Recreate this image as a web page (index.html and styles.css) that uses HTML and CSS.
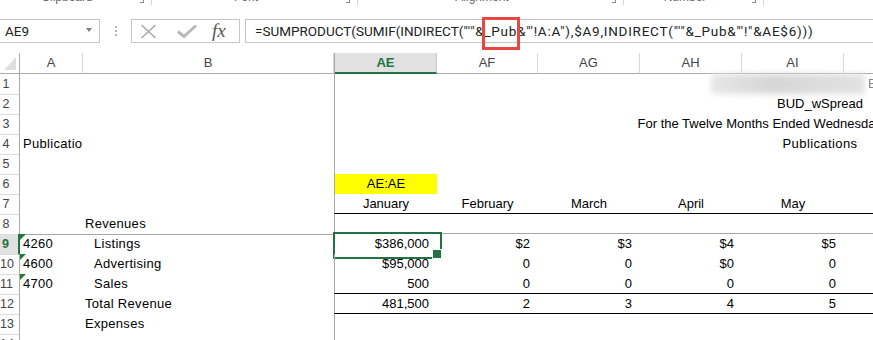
FILE: index.html
```html
<!DOCTYPE html>
<html>
<head>
<meta charset="utf-8">
<title>Excel</title>
<link rel="stylesheet" href="styles.css">
</head>
<body>
<div class="ribbon">
  <div class="grp g1"><span class="glabel">Clipboard</span><span class="launch"><i></i></span></div>
  <div class="grp g2"><span class="glabel">Font</span><span class="launch"><i></i></span></div>
  <div class="grp g3"><span class="glabel">Alignment</span><span class="launch"><i></i></span></div>
  <div class="grp g4"><span class="glabel">Number</span><span class="launch"><i></i></span></div>
</div>

<div class="fbar">
  <div class="namebox"><span>AE9</span><span class="arrow"></span></div>
  <div class="grip"><i></i><i></i><i></i></div>
  <div class="fxbox">
    <svg class="ico-x" width="17" height="15" viewBox="0 0 17 15"><path d="M1.5 1L15.5 14M15.5 1L1.5 14" stroke="#ababab" stroke-width="1.6" fill="none"/></svg>
    <svg class="ico-ok" width="20" height="14" viewBox="0 0 20 14"><path d="M1 7.5L7 12.5L19 1.5" stroke="#b9b9b9" stroke-width="3" fill="none" stroke-linejoin="miter"/></svg>
    <span class="fx">fx</span>
  </div>
  <div class="formula">=SUMPRODUCT(SUMIF(INDIRECT(<span class="fs">"'"&amp;_Pub&amp;"'!A:A"),$A9,INDIRECT("'"&amp;_Pub&amp;"'!"&amp;AE$6)))</span></div>
</div>

<div class="sheet">
  <div class="row hdr">
    <div class="corner"><svg width="12" height="13" viewBox="0 0 12 13"><path d="M12 0V13H0Z" fill="#dedede"/></svg></div>
    <div class="ch">A</div>
    <div class="ch">B</div>
    <div class="right">
      <div class="ch csel">AE</div><div class="ch">AF</div><div class="ch">AG</div><div class="ch">AH</div><div class="ch">AI</div><div class="ch"></div><div class="ch"></div>
    </div>
  </div>

  <div class="row">
    <div class="rh">1</div><div class="c"></div><div class="c"></div>
    <div class="right"><div class="redact"></div><span class="tail">E</span></div>
  </div>
  <div class="row">
    <div class="rh">2</div><div class="c"></div><div class="c"></div>
    <div class="right"><div class="title">BUD_wSpread</div></div>
  </div>
  <div class="row">
    <div class="rh">3</div><div class="c"></div><div class="c"></div>
    <div class="right"><div class="title">For the Twelve Months Ended Wednesday, December 31, 2014</div></div>
  </div>
  <div class="row">
    <div class="rh">4</div><div class="c a">Publications</div><div class="c"></div>
    <div class="right"><div class="title wide">Publications</div></div>
  </div>
  <div class="row">
    <div class="rh">5</div><div class="c"></div><div class="c"></div>
    <div class="right"></div>
  </div>
  <div class="row">
    <div class="rh">6</div><div class="c"></div><div class="c"></div>
    <div class="right"><div class="c ctr yel">AE:AE</div></div>
  </div>
  <div class="row">
    <div class="rh">7</div><div class="c"></div><div class="c"></div>
    <div class="right rule">
      <div class="c ctr">January</div><div class="c ctr">February</div><div class="c ctr">March</div><div class="c ctr">April</div><div class="c ctr">May</div>
    </div>
  </div>
  <div class="row frz">
    <div class="rh">8</div><div class="c"></div><div class="c b">Revenues</div>
    <div class="right"></div>
  </div>
  <div class="row">
    <div class="rh rsel">9</div><div class="c a err">4260</div><div class="c b ind">Listings</div>
    <div class="right">
      <div class="c num sel">$386,000</div><div class="c num">$2</div><div class="c num">$3</div><div class="c num">$4</div><div class="c num">$5</div>
    </div>
  </div>
  <div class="row">
    <div class="rh">10</div><div class="c a err">4600</div><div class="c b ind">Advertising</div>
    <div class="right">
      <div class="c num">$95,000</div><div class="c num">0</div><div class="c num">0</div><div class="c num">$0</div><div class="c num">0</div>
    </div>
  </div>
  <div class="row">
    <div class="rh">11</div><div class="c a err">4700</div><div class="c b ind">Sales</div>
    <div class="right rule">
      <div class="c num">500</div><div class="c num">0</div><div class="c num">0</div><div class="c num">0</div><div class="c num">0</div>
    </div>
  </div>
  <div class="row">
    <div class="rh">12</div><div class="c"></div><div class="c b">Total Revenue</div>
    <div class="right rule">
      <div class="c num">481,500</div><div class="c num">2</div><div class="c num">3</div><div class="c num">4</div><div class="c num">5</div>
    </div>
  </div>
  <div class="row">
    <div class="rh">13</div><div class="c"></div><div class="c b">Expenses</div>
    <div class="right"></div>
  </div>
  <div class="row">
    <div class="rh">14</div><div class="c"></div><div class="c"></div>
    <div class="right"></div>
  </div>
</div>

<div class="callout"></div>
</body>
</html>
```

FILE: styles.css
```css
* { box-sizing: border-box; }
html, body { margin: 0; padding: 0; background: #fff; }
body {
  width: 873px;
  height: 340px;
  overflow: hidden;
  position: relative;
  font-family: "Liberation Sans", Arial, sans-serif;
  color: #000;
}

/* ribbon group labels (cut off at top) */
.ribbon { display: flex; height: 6px; overflow: hidden; }
.grp { flex: none; display: flex; align-items: flex-start; border-right: 1px solid #d6d6d6; height: 5px; }
.g1 { width: 152px; }
.g2 { width: 206px; }
.g3 { width: 266px; }
.g4 { width: 140px; }
.glabel {
  flex: 1;
  text-align: center;
  font-size: 12px;
  line-height: 12px;
  margin-top: -9px;
  color: #6a6a6a;
  white-space: nowrap;
}
.launch { width: 17px; padding-left: 6px; }
.launch i { display: block; width: 4px; height: 3px; border-right: 1px solid #8a8a8a; border-bottom: 1px solid #8a8a8a; }

/* formula bar */
.fbar {
  display: flex;
  align-items: center;
  height: 24px;
  margin-top: 13px;
  margin-bottom: 10px;
  font-family: Roboto, "Liberation Sans", sans-serif;
  font-size: 13.5px;
  color: #222;
}
.fbar > * { flex: none; }
.namebox {
  width: 101px;
  margin-left: -1px;
  height: 24px;
  border: 1px solid #c6c6c6;
  display: flex;
  align-items: center;
  padding-left: 5px;
}
.arrow {
  margin-left: auto;
  margin-right: 7px;
  width: 0; height: 0;
  border-left: 3.5px solid transparent;
  border-right: 3.5px solid transparent;
  border-top: 4px solid #7d7d7d;
  margin-top: -2px;
}
.grip { margin-left: 15px; width: 2px; display: flex; flex-direction: column; gap: 2px; }
.grip i { display: block; width: 2px; height: 2px; background: #b4b4b4; }
.fxbox {
  margin-left: 14px;
  width: 109px;
  height: 24px;
  border: 1px solid #c6c6c6;
  display: flex;
  align-items: center;
  padding-left: 8px;
}
.ico-x { flex: none; }
.ico-ok { flex: none; margin-left: 20px; }
.fx {
  margin-left: 15px;
  font-family: "Liberation Serif", "Times New Roman", serif;
  font-style: italic;
  font-size: 19px;
  color: #555;
  line-height: 20px;
}
.formula {
  margin-left: 5px;
  width: 640px;
  height: 24px;
  border: 1px solid #c6c6c6;
  padding-left: 9px;
  line-height: 22px;
  white-space: nowrap;
  overflow: hidden;
}
.fs { letter-spacing: 0.75px; }

/* sheet */
.sheet { font-size: 13px; line-height: 20px; }
.row {
  display: grid;
  grid-template-columns: 20px 63px 251px 1fr;
  height: 20px;
}
.right {
  display: grid;
  grid-template-columns: 102px 101px 102px 102px 102px 102px 102px;
  border-left: 1px solid #a8a8a8;
  position: relative;
  height: 20px;
}
.hdr { height: 21px; }
.hdr .right { height: 21px; }
.corner {
  border-right: 1px solid #ababab;
  border-bottom: 1px solid #ababab;
  display: flex;
  align-items: flex-end;
  justify-content: flex-end;
  padding: 0 3px 3px 0;
}
.ch {
  height: 21px;
  border-right: 1px solid #d8d8d8;
  border-bottom: 1px solid #ababab;
  text-align: center;
  color: #444;
  line-height: 20px;
}
.csel {
  background: #e1e1e1;
  color: #217346;
  font-weight: bold;
  border-bottom: 2px solid #217346;
  border-right-color: #c8c8c8;
}
.rh {
  border-right: 1px solid #ababab;
  border-bottom: 1px solid #dcdcdc;
  text-align: center;
  padding-right: 7px;
  color: #444;
  font-size: 12.5px;
  white-space: nowrap;
}
.rsel {
  background: #e1e1e1;
  color: #217346;
  font-weight: bold;
  border-right: 2px solid #217346;
}
.c { padding: 0 2px; white-space: nowrap; overflow: hidden; }
.a { padding-left: 3px; letter-spacing: 0.3px; }
.b { letter-spacing: 0.3px; }
.ind { padding-left: 11px; }
.num { text-align: right; padding-right: 8px; }
.ctr { text-align: center; }
.yel { background: #ffff00; }
.rule { border-bottom: 1px solid #000; }
.frz > .c, .frz > .right { border-bottom: 1px solid #a8a8a8; }

.title {
  grid-column: 4 / 8;
  width: 420px;
  margin-left: -30px;
  text-align: center;
  white-space: nowrap;
}
.wide { letter-spacing: 0.4px; }

.redact {
  position: absolute;
  left: 376px;
  top: 0;
  width: 154px;
  height: 20px;
  background: linear-gradient(90deg, #e6e6e6, #d6d6d6 40%, #dcdcdc 70%, #e2e2e2);
  filter: blur(3px);
}
.tail {
  position: absolute;
  left: 533px;
  top: 0;
  color: #888;
  filter: blur(0.6px);
}

.err { position: relative; }
.err::before {
  content: "";
  position: absolute;
  left: 0;
  top: 0;
  border-top: 6px solid #1e7b34;
  border-right: 6px solid transparent;
}

.sel { position: relative; overflow: visible; }
.sel::before {
  content: "";
  position: absolute;
  left: -2px;
  top: -2px;
  width: 105px;
  height: 23px;
  border: 2px solid #217346;
}
.sel::after {
  content: "";
  position: absolute;
  left: 97px;
  top: 15px;
  width: 8px;
  height: 8px;
  background: #217346;
  border: 1px solid #fff;
}

/* annotation */
.callout {
  position: absolute;
  left: 482px;
  top: 17px;
  width: 38px;
  height: 33px;
  border: 3px solid #e8463e;
}
```
